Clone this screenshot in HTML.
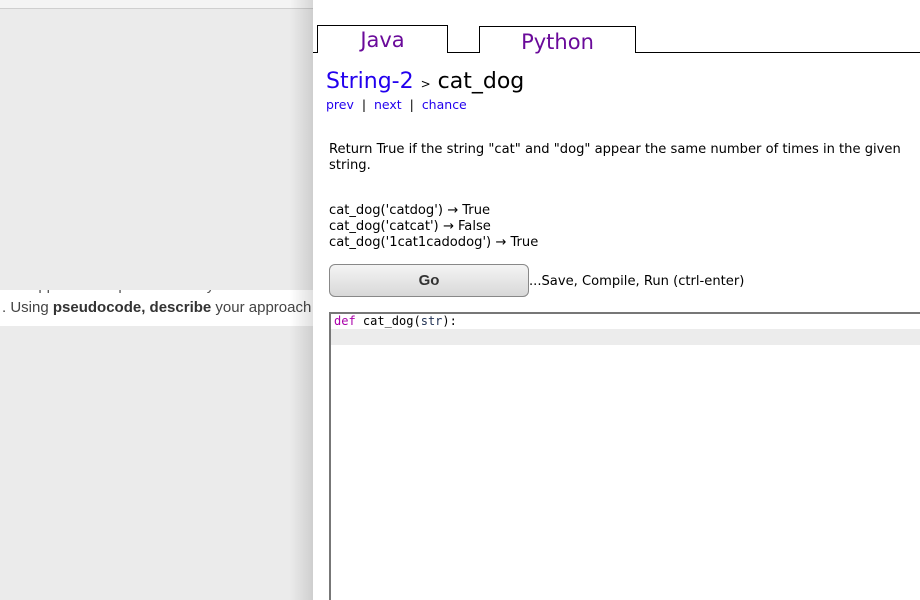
<!DOCTYPE html>
<html style="overflow:hidden;height:600px"><head><style>
body{margin:0;width:920px;height:600px;overflow:hidden;position:relative;background:#fff;font-family:"DejaVu Sans",Verdana,sans-serif}
.left{position:absolute;left:0;top:0;width:313px;height:600px;background:#ebebeb}
.topbar{position:absolute;left:0;top:0;width:313px;height:8px;background:#f4f4f4;border-bottom:1px solid #cfcfcf}
.shadow{position:absolute;left:290px;top:0;width:23px;height:600px;background:linear-gradient(to right,rgba(0,0,0,0),rgba(0,0,0,0.12))}
.strip{position:absolute;left:0;top:290px;width:313px;height:36px;background:#fff;font-family:"Liberation Sans",sans-serif;font-size:15px;color:#444;white-space:nowrap;overflow:hidden}
.abs{position:absolute}
.tab{position:absolute;border:1px solid #000;border-bottom:none;background:#fff;color:#6a0a9a;text-align:center}
a{color:#2200ee;text-decoration:none}
</style></head><body>
<div class="left"><div class="topbar"></div>
<div class="strip"><div class="abs" style="top:-13px;left:30px;color:#555">approach. Explain how they're similar</div><div class="abs" style="top:9px;left:2px">. Using <b style="color:#333">pseudocode, describe</b> your approach</div></div>
</div>
<div class="shadow"></div>
<div class="abs" style="left:313px;top:52px;width:607px;height:1px;background:#000"></div>
<div class="tab" style="left:317px;top:25px;width:129px;height:27px;font-size:21px;line-height:29px">Java</div>
<div class="tab" style="left:479px;top:26px;width:155px;height:26px;font-size:21px;line-height:30px">Python</div>
<div class="abs" style="left:326px;top:69px;font-size:22px"><a>String-2</a> <span style="font-size:12px">&gt;</span> cat_dog</div>
<div class="abs" style="left:326px;top:97px;font-size:12.5px"><a>prev</a> &nbsp;|&nbsp; <a>next</a> &nbsp;|&nbsp; <a>chance</a></div>
<div class="abs" style="left:329px;top:142px;width:585px;font-size:13.1px;line-height:16px;color:#000">Return True if the string "cat" and "dog" appear the same number of times in the given string.</div>
<div class="abs" style="left:329px;top:203px;font-size:13.1px;line-height:16px">cat_dog('catdog') → True<br>cat_dog('catcat') → False<br>cat_dog('1cat1cadodog') → True</div>
<div class="abs" style="left:329px;top:264px;width:198px;height:31px;border:1px solid #888;border-radius:6px;background:linear-gradient(#f4f4f4,#d8d8d8);text-align:center;line-height:31px;font-family:'Liberation Sans',sans-serif;font-weight:bold;font-size:15px;color:#333">Go</div>
<div class="abs" style="left:529px;top:274px;font-size:13.1px">...Save, Compile, Run (ctrl-enter)</div>
<div class="abs" style="left:329px;top:312px;width:600px;height:288px;border:2px solid #777;border-right:none;border-bottom:none;box-sizing:border-box"></div>
<div class="abs" style="left:331px;top:329px;width:589px;height:16px;background:#ececec"></div>
<div class="abs" style="left:334px;top:314px;font-family:'DejaVu Sans Mono',monospace;font-size:12px;color:#000"><span style="color:#a0a">def</span> cat_dog(<span style="color:#235">str</span>):</div>
</body></html>
